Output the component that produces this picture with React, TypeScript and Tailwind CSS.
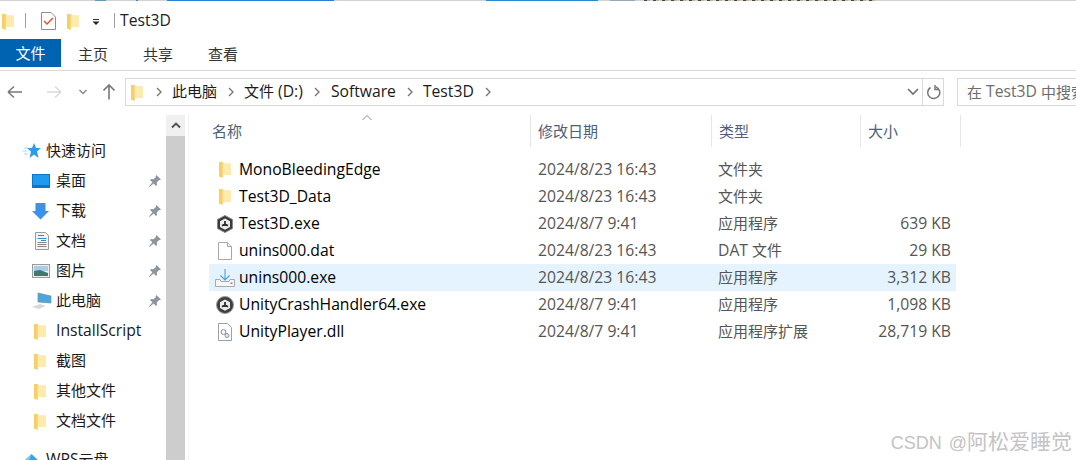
import React from "react";

const FONT = '"Open Sans","Noto Sans CJK SC",sans-serif';

function T({ s }: { s: string }) {
  const parts = s.split(/([\u4e00-\u9fff]+)/).filter(Boolean);
  return (
    <>
      {parts.map((p, i) =>
        /[\u4e00-\u9fff]/.test(p) ? (
          <span key={i} className="text-[15px]">{p}</span>
        ) : (
          <span key={i} className="whitespace-pre">{p}</span>
        )
      )}
    </>
  );
}

function Folder({ className = "" }: { className?: string }) {
  return (
    <svg width="12" height="17" viewBox="0 0 12 17" className={`shrink-0 ${className}`}>
      <path d="M0 1h4l1 1.500h7V14H4v3L0 15.500z" fill="#fcdf8c" />
      <path d="M4 3h8v11H4z" fill="#fdeaae" />
      <path d="M0 1h3.500v15.500L0 15.500z" fill="#f7cf6a" />
    </svg>
  );
}

function Pin() {
  return (
    <svg width="14" height="14" viewBox="0 0 14 14" className="shrink-0">
      <path d="M8.500 1 13 5.500l-1.200.6-1 .1-2 2.300.2 2.400-1 1-2.300-2.400L1.500 13 1 12.500l3.400-4.200L2 6l1-1 2.400.2 2.300-2 .1-1z" fill="#8c949c" />
    </svg>
  );
}

function UnityIcon({ round = false }: { round?: boolean }) {
  return (
    <svg width="18" height="18" viewBox="0 0 18 18">
      {round ? (
        <circle cx="9" cy="9" r="8.500" fill="#3f3f3f" stroke="#9a9a9a" />
      ) : (
        <path d="M9 .5 16.500 4.500v9L9 17.500 1.500 13.500v-9z" fill="#3a3a3a" stroke="#8a8a8a" strokeLinejoin="round" />
      )}
      <path d="M9 3.500 14 6.300v5.600L9 14.700 4 11.900V6.300z" fill="#ececec" />
      <path d="M9 9V6M9 9l3 1.700M9 9l-3 1.700" stroke="#2e2e2e" strokeWidth="1.800" />
    </svg>
  );
}

function DocIcon() {
  return (
    <svg width="14" height="18" viewBox="0 0 14 18">
      <path d="M.5.500h9l4 4v13H.5z" fill="#fff" stroke="#a8a8a8" />
      <path d="M9.500.500v4h4" fill="#f0f0f0" stroke="#a8a8a8" />
    </svg>
  );
}

function InstallIcon() {
  return (
    <svg width="20" height="18" viewBox="0 0 20 18">
      <path d="M.5 10.500H5l1 2h8l1-2h4.500v7H.5z" fill="#f6f6f6" stroke="#a8a8a8" />
      <path d="M10 0v11M5.500 6.500 10 11l4.500-4.500" fill="none" stroke="#4a9fe0" strokeWidth="1.100" />
      <rect x="15.500" y="13.500" width="2" height="1.500" fill="#888" />
    </svg>
  );
}

function DllIcon() {
  return (
    <svg width="14" height="18" viewBox="0 0 14 18">
      <path d="M.5.500h9l4 4v13H.5z" fill="#fff" stroke="#a0a0a0" />
      <circle cx="5.500" cy="9" r="2.400" fill="none" stroke="#8a8a8a" />
      <circle cx="9" cy="12.500" r="2" fill="#dbe9f5" stroke="#7a9ab8" />
    </svg>
  );
}

const quick = [
  {
    name: "桌面",
    icon: (
      <svg width="18" height="14" viewBox="0 0 18 14">
        <rect x="0.500" y="0.500" width="17" height="13" fill="#1e9bf0" stroke="#0a78c8" />
        <rect x="1" y="11" width="16" height="2" fill="#0a78c8" />
      </svg>
    ),
  },
  {
    name: "下载",
    icon: (
      <svg width="17" height="18" viewBox="0 0 17 18">
        <path d="M3.500 1h10v8H17l-8.500 8.500L0 9h3.500z" fill="#3b92e6" />
      </svg>
    ),
  },
  {
    name: "文档",
    icon: (
      <svg width="16" height="18" viewBox="0 0 16 18" className="ml-[2px]">
        <path d="M1.500.5h10l3 3v14h-13z" fill="#f4f4f4" stroke="#9a9a9a" />
        <path d="M4 3.500h6M3.500 6.500h9M7 8.500h5" stroke="#2a90d8" />
        <path d="M3.500 10.500h9M3.500 12.500h9M3.500 14.500h9" stroke="#888" />
      </svg>
    ),
  },
  {
    name: "图片",
    icon: (
      <svg width="18" height="14" viewBox="0 0 18 14">
        <rect x="0.500" y="0.500" width="17" height="13" fill="#eee" stroke="#9a9a9a" />
        <rect x="2" y="2" width="14" height="5" fill="#a9cfe8" />
        <path d="M2 7l6-1 8 3v3H2z" fill="#3f7a70" />
      </svg>
    ),
  },
  {
    name: "此电脑",
    icon: (
      <svg width="20" height="18" viewBox="0 0 20 18">
        <path d="M6 1l13 3v7L6 10z" fill="#4aa6dc" stroke="#7a8a96" strokeWidth="0.700" />
        <path d="M0 15l8-3 6 2-7 3z" fill="#d8d8d8" />
      </svg>
    ),
  },
];

const others = ["InstallScript", "截图", "其他文件", "文档文件"];

const files = [
  { name: "MonoBleedingEdge", date: "2024/8/23 16:43", type: "文件夹", size: "", icon: <Folder /> },
  { name: "Test3D_Data", date: "2024/8/23 16:43", type: "文件夹", size: "", icon: <Folder /> },
  { name: "Test3D.exe", date: "2024/8/7 9:41", type: "应用程序", size: "639 KB", icon: <UnityIcon /> },
  { name: "unins000.dat", date: "2024/8/23 16:43", type: "DAT 文件", size: "29 KB", icon: <DocIcon /> },
  { name: "unins000.exe", date: "2024/8/23 16:43", type: "应用程序", size: "3,312 KB", icon: <InstallIcon />, selected: true },
  { name: "UnityCrashHandler64.exe", date: "2024/8/7 9:41", type: "应用程序", size: "1,098 KB", icon: <UnityIcon round /> },
  { name: "UnityPlayer.dll", date: "2024/8/7 9:41", type: "应用程序扩展", size: "28,719 KB", icon: <DllIcon /> },
];

function Chevron() {
  return (
    <svg width="7" height="10" viewBox="0 0 7 10" className="shrink-0">
      <path d="M1 1l4 4-4 4" fill="none" stroke="#777" strokeWidth="1.400" />
    </svg>
  );
}

export default function App() {
  return (
    <div className="relative w-[1076px] h-[460px] overflow-hidden bg-white text-[15.7px] text-[#1a1a1a]" style={{ fontFamily: FONT }}>
      {/* Cropped edge of the window above */}
      <div className="h-[1px] flex bg-[#d2d2d2]">
        <div className="w-[95px]" />
        <div className="w-[11px] bg-[#5f9bb8]" />
        <div className="w-[30px]" />
        <div className="w-[2px] bg-[#3b7fc4]" />
        <div className="w-[29px]" />
        <div className="w-[167px] bg-[#2a7fd8]" />
        <div className="w-[152px]" />
        <div className="w-[112px] bg-[#2a8ad0]" />
        <div className="w-[12px]" />
        <div className="w-[25px] bg-[#9aa8b4]" />
        <div className="w-[9px]" />
        <div className="w-[234px] bg-[repeating-linear-gradient(90deg,#444_0,#444_3px,#c9b48a_3px,#c9b48a_6px,#d2d2d2_6px,#d2d2d2_9px)]" />
      </div>

      {/* Title bar */}
      <div className="h-[38px] flex items-center pt-[1px]">
        <Folder className="ml-[2px] mt-[1px]" />
        <div className="w-px h-[15px] bg-[#a0a0a0] ml-[11px]" />
        <svg width="15" height="18" viewBox="0 0 15 18" className="ml-[15px] mt-[1px]">
          <path d="M.5.500h9.500l4.500 4.500v12.500H.5z" fill="#fff" stroke="#8f8f8f" />
          <path d="M3 9l3 3 6-6" fill="none" stroke="#e0552a" strokeWidth="1.500" />
        </svg>
        <Folder className="ml-[11px] mt-[1px]" />
        <svg width="8" height="6" viewBox="0 0 8 6" className="ml-[13px] mt-[2px]">
          <path d="M1 0.500h6" stroke="#333" />
          <path d="M0.500 2.500h7L4 6z" fill="#222" />
        </svg>
        <div className="w-px h-[15px] bg-[#a0a0a0] ml-[14px]" />
        <span className="ml-[5px] text-[#222]">Test3D</span>
      </div>

      {/* Ribbon tabs */}
      <div className="h-[32px] flex border-b border-[#dadada]">
        <div className="w-[61px] h-[28px] bg-[#0063b1] text-white flex items-center justify-center"><T s="文件" /></div>
        <div className="flex items-center pl-[17px] gap-[35px] h-[30px] text-[#333]">
          <T s="主页" />
          <T s="共享" />
          <T s="查看" />
        </div>
      </div>

      {/* Address row */}
      <div className="h-[43px] flex items-center pb-[1px]">
        <div className="w-[125px] flex items-center shrink-0">
          <svg width="16" height="14" viewBox="0 0 16 14" className="ml-[7px]">
            <path d="M1 7h14M1 7l6-5.500M1 7l6 5.500" fill="none" stroke="#777" strokeWidth="1.500" />
          </svg>
          <svg width="16" height="14" viewBox="0 0 16 14" className="ml-[23px]">
            <path d="M15 7H1M15 7L9 1.500M15 7l-6 5.500" fill="none" stroke="#d9d9d9" strokeWidth="1.500" />
          </svg>
          <svg width="8" height="6" viewBox="0 0 8 6" className="ml-[17px]">
            <path d="M0.500 1l3.500 3.500L7.500 1" fill="none" stroke="#888" strokeWidth="1.500" />
          </svg>
          <svg width="12" height="16" viewBox="0 0 12 16" className="ml-[16px]">
            <path d="M6 15.500V1M.5 6.500 6 1l5.500 5.500" fill="none" stroke="#777" strokeWidth="1.600" />
          </svg>
        </div>
        <div className="w-[819px] h-[28px] border border-[#d9d9d9] flex items-center shrink-0">
          <Folder className="ml-[5px]" />
          <div className="ml-[13px]"><Chevron /></div>
          <span className="ml-[9px]"><T s="此电脑" /></span>
          <div className="ml-[11px]"><Chevron /></div>
          <span className="ml-[9px]"><T s="文件 (D:)" /></span>
          <div className="ml-[11px]"><Chevron /></div>
          <span className="ml-[10px]">Software</span>
          <div className="ml-[11px]"><Chevron /></div>
          <span className="ml-[9px]">Test3D</span>
          <div className="ml-[11px]"><Chevron /></div>
          <div className="flex-1" />
          <svg width="12" height="8" viewBox="0 0 12 8" className="mr-[3px]">
            <path d="M1 1l5 5 5-5" fill="none" stroke="#707070" strokeWidth="1.600" />
          </svg>
          <div className="w-[21px] h-full border-l border-[#d9d9d9] flex items-center justify-center">
            <svg width="15" height="15" viewBox="0 0 15 15">
              <path d="M4.500 2.500A6 6 0 1 0 10 2" fill="none" stroke="#777" strokeWidth="1.500" />
              <path d="M9 0v4.500h4" fill="none" stroke="#777" strokeWidth="1.500" />
            </svg>
          </div>
        </div>
        <div className="ml-[13px] flex-1 h-[28px] border border-[#d9d9d9] border-r-0 flex items-center pl-[9px] text-[#6d6d6d] whitespace-nowrap overflow-hidden">
          <T s="在 Test3D 中搜索" />
        </div>
      </div>

      {/* Body */}
      <div className="flex h-[346px]">
        {/* Nav */}
        <div className="w-[166px] shrink-0 pt-[22px] overflow-hidden">
          <div className="h-[30px] flex items-center pl-[23px]">
            <svg width="18" height="16" viewBox="0 0 18 16" className="shrink-0">
              <path d="M11 0l2 5h5l-4 3.400L15.500 15 11 11.500 6.500 15 8 8.400 4 5h5z" fill="#2d9be8" />
              <path d="M1 5h4M0 8h4M1 11h4" stroke="#a8d4f2" />
            </svg>
            <span className="ml-[5px]"><T s="快速访问" /></span>
          </div>
          {quick.map((q) => (
            <div key={q.name} className="h-[30px] flex items-center">
              <div className="w-[56px] pl-[32px] flex justify-start shrink-0 items-center">{q.icon}</div>
              <span className="flex-1"><T s={q.name} /></span>
              <div className="mr-[4px] flex"><Pin /></div>
            </div>
          ))}
          {others.map((q) => (
            <div key={q} className="h-[30px] flex items-center">
              <div className="w-[56px] pl-[34px] shrink-0 flex"><Folder /></div>
              <span><T s={q} /></span>
            </div>
          ))}
          <div className="h-[30px] mt-[9px] flex items-center pl-[22px]">
            <svg width="19" height="14" viewBox="0 0 19 14" className="shrink-0">
              <path d="M9.500 1l8.500 8-4 4H5L1 9z" fill="#37a5ec" />
              <path d="M9.500 1 1 9l4 4z" fill="#6fd0e8" />
            </svg>
            <span className="ml-[5px]"><T s="WPS云盘" /></span>
          </div>
        </div>

        {/* Scrollbar */}
        <div className="w-[19px] shrink-0 flex flex-col mt-[1px] bg-[#cdcdcd]">
          <div className="h-[21px] bg-[#f0f0f0] flex items-center justify-center">
            <svg width="10" height="7" viewBox="0 0 10 7">
              <path d="M1 5.500l4-4 4 4" fill="none" stroke="#505050" strokeWidth="1.800" />
            </svg>
          </div>
        </div>

        {/* List */}
        <div className="flex-1 ml-[3px] border-l border-[#f3f3f3] relative">
          <div className="h-[32px] mt-[1px] flex text-[#4c607a] pl-[22px]">
            <div className="w-[319px] pt-[5px] pl-[1px]"><T s="名称" /></div>
            <div className="w-[181px] border-l border-[#e5e5e5] pl-[7px] pt-[5px]"><T s="修改日期" /></div>
            <div className="w-[149px] border-l border-[#e5e5e5] pl-[7px] pt-[5px]"><T s="类型" /></div>
            <div className="w-[101px] border-x border-[#e5e5e5] pl-[7px] pt-[5px]"><T s="大小" /></div>
            <svg width="10" height="6" viewBox="0 0 10 6" className="absolute left-[173px] top-[1px]">
              <path d="M0.500 5L5 0.500 9.500 5" fill="none" stroke="#8a8a8a" />
            </svg>
          </div>
          <div className="mt-[9px] ml-[20px] w-[747px]">
            {files.map((f) => (
              <div key={f.name} className={`h-[27px] flex items-center ${f.selected ? "bg-[#e5f3ff]" : ""}`}>
                <div className="w-[30px] shrink-0 flex justify-center pl-[1px]">{f.icon}</div>
                <div className="w-[299px] shrink-0 text-black">{f.name}</div>
                <div className="w-[180px] shrink-0 text-[#555]">{f.date}</div>
                <div className="w-[143px] shrink-0 text-[#555]"><T s={f.type} /></div>
                <div className="w-[90px] shrink-0 text-right text-[#555]">{f.size}</div>
              </div>
            ))}
          </div>
        </div>
      </div>

      {/* Watermark */}
      <div className="absolute right-[4px] bottom-[3px] flex items-baseline text-[18px] text-[#c4c4c4] whitespace-nowrap font-['Liberation_Sans','Noto_Sans_CJK_SC',sans-serif]">
        <span className="mr-[7px]">CSDN</span>
        <span>@</span>
        <span className="text-[21px]">阿松爱睡觉</span>
      </div>
    </div>
  );
}
